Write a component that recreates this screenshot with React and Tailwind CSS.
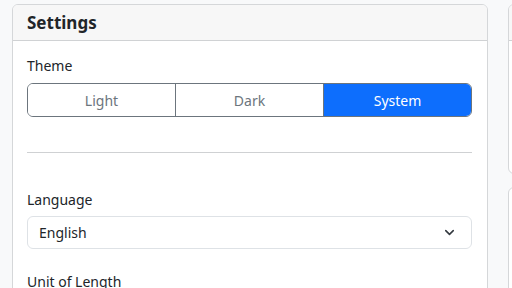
import React, { useState } from "react";
import { ChevronDown } from "lucide-react";

export default function App() {
  const [theme, setTheme] = useState("System");
  const themes = ["Light", "Dark", "System"];

  return (
    <div
      className="min-h-screen bg-[#f8f9fa] flex gap-[20px] pl-[12px] pt-[4px] overflow-hidden"
      style={{ fontFamily: '"Noto Sans", "Open Sans", sans-serif' }}
    >
      {/* Settings card */}
      <div className="w-[476px] shrink-0 h-[300px] bg-white border border-[#d5d7d9] rounded-[6px] overflow-hidden">
        <div className="h-[36px] bg-[#f7f7f7] border-b border-[#d0d2d4] px-[14px] flex items-center">
          <h1 className="text-[17px] font-bold text-[#212529]">Settings</h1>
        </div>

        <div className="pl-[14px] pr-[15px] pt-[14px]">
          <label className="block text-[14px] leading-[21px] text-[#212529] mb-[7px]">Theme</label>
          <div className="flex h-[34px] border border-[#6c757d] rounded-[6px] overflow-hidden">
            {themes.map((t, i) => (
              <button
                key={t}
                onClick={() => setTheme(t)}
                className={
                  "flex-1 text-[14px] " +
                  (i > 0 ? "border-l border-[#6c757d] " : "") +
                  (theme === t ? "bg-[#0d6efd] text-white" : "bg-white text-[#6c757d]")
                }
              >
                {t}
              </button>
            ))}
          </div>

          <hr className="mt-[35px] border-t border-[#cfd1d3]" />

          <label className="block mt-[36px] text-[14px] leading-[21px] text-[#212529] mb-[6px]">Language</label>
          <div className="h-[33px] border border-[#dee2e6] rounded-[6px] flex items-center justify-between pl-[11px] pr-[14px]">
            <span className="text-[14px] text-[#212529]">English</span>
            <ChevronDown size={15} strokeWidth={2.5} className="text-[#343a40]" />
          </div>

          <label className="block mt-[22px] text-[14px] leading-[21px] text-[#212529]">Unit of Length</label>
        </div>
      </div>

      {/* Right column */}
      <div className="flex flex-col gap-[13px] w-[200px] shrink-0">
        <div className="h-[170px] bg-white border border-[#d5d7d9] rounded-[6px] overflow-hidden">
          <div className="h-[36px] bg-[#f7f7f7] border-b border-[#d0d2d4]" />
        </div>
        <div className="h-[120px] bg-white border border-[#d5d7d9] rounded-[6px]" />
      </div>
    </div>
  );
}
